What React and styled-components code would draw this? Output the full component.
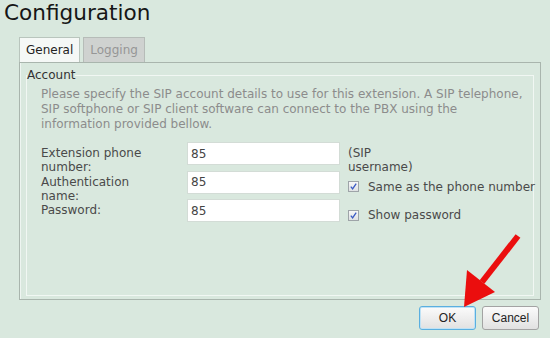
import React from "react";
import styled, { createGlobalStyle } from "styled-components";

const GlobalStyle = createGlobalStyle`
  html, body { margin: 0; padding: 0; }
  body {
    background: #d9e8de;
    font-family: "DejaVu Sans", Verdana, sans-serif;
  }
`;

const Page = styled.div`
  position: relative;
  width: 550px;
  height: 338px;
  overflow: hidden;
  background: #d9e8de;
`;

const Title = styled.h1`
  margin: 0;
  padding-left: 4px;
  font-size: 21.6px;
  line-height: 26px;
  font-weight: normal;
  color: #161616;
`;

const Dialog = styled.div`
  margin: 11px 0 0 19px;
  width: 522px;
`;

const Tabs = styled.div`
  display: flex;
  gap: 3px;
  height: 25px;
`;

const Tab = styled.div`
  box-sizing: border-box;
  height: 25px;
  padding: 0 6px;
  font-size: 12px;
  line-height: 24px;
  border: 1px solid ${(p) => (p.$active ? "#b9c5bd" : "#b6bcb8")};
  border-bottom: none;
  background: ${(p) => (p.$active ? "#f5f8f6" : "#cfd2d0")};
  color: ${(p) => (p.$active ? "#222" : "#969696")};
`;

const Panel = styled.div`
  box-sizing: border-box;
  height: 238px;
  border: 1px solid #a9b5ad;
  box-shadow: inset 1px 0 0 #eef5f1;
  padding: 5px 6px 3px 6px;
`;

const Fieldset = styled.fieldset`
  box-sizing: border-box;
  height: 100%;
  margin: 0;
  padding: 0;
  border: 1px solid #f1f7f3;
  min-inline-size: 0;
`;

const Legend = styled.legend`
  padding: 0;
  font-size: 12px;
  line-height: 14px;
  color: #333;
`;

const Content = styled.div`
  padding: 5px 0 0 14px;
`;

const Intro = styled.p`
  margin: 0;
  width: 485px;
  font-size: 12px;
  line-height: 15px;
  color: #8c8c8c;
`;

const FormGrid = styled.div`
  margin-top: 10px;
  display: grid;
  grid-template-columns: 138px 153px max-content;
  column-gap: 8px;
  grid-auto-rows: 28.5px;
  justify-content: start;
`;

const Label = styled.div`
  padding-top: 4px;
  max-width: 125px;
  font-size: 12px;
  line-height: 14px;
  color: #4a4a4a;
`;

const Field = styled.input`
  box-sizing: border-box;
  width: 153px;
  min-width: 0;
  height: 23px;
  margin: 0;
  padding: 0 3px;
  border: 1px solid #d3dcd6;
  background: #fff;
  font-family: "DejaVu Sans", Verdana, sans-serif;
  font-size: 12px;
  color: #444;
  outline: none;
`;

const Hint = styled.div`
  padding-top: 4px;
  width: 70px;
  font-size: 12px;
  line-height: 14px;
  color: #4a4a4a;
`;

const CheckRow = styled.label`
  display: flex;
  align-items: center;
  gap: 9px;
  padding-top: 4px;
  font-size: 12px;
  line-height: 14px;
  color: #4a4a4a;
  white-space: nowrap;
`;

const Box = styled.span`
  box-sizing: border-box;
  display: inline-flex;
  align-items: center;
  justify-content: center;
  width: 11px;
  height: 11px;
  border: 1px solid #9ea4a8;
  background: linear-gradient(#f7f7f7, #dfe1e3);
`;

const Buttons = styled.div`
  display: flex;
  justify-content: flex-end;
  gap: 6px;
  margin-top: 6px;
  padding-right: 2px;
`;

const Button = styled.button`
  box-sizing: border-box;
  width: 57px;
  height: 24px;
  margin: 0;
  padding: 0;
  border-radius: 3px;
  border: 1px solid ${(p) => (p.$primary ? "#5aafe0" : "#a3a3a3")};
  box-shadow: ${(p) => (p.$primary ? "inset 0 0 0 1px #bfe2f5" : "none")};
  background: linear-gradient(#fbfbfb, #e1e1e1);
  font-family: "Liberation Sans", Arial, sans-serif;
  font-size: 12px;
  color: #222;
`;

const ArrowLayer = styled.svg`
  position: absolute;
  left: 0;
  top: 0;
  pointer-events: none;
`;

function Check() {
  return (
    <Box>
      <svg width="9" height="9" viewBox="0 0 9 9">
        <path d="M1.8 4.6 L3.6 6.8 L7.2 1.6" fill="none" stroke="#3b5bc4" strokeWidth="1.3" />
      </svg>
    </Box>
  );
}

export default function App() {
  return (
    <>
      <GlobalStyle />
      <Page>
        <Title>Configuration</Title>
        <Dialog>
          <Tabs>
            <Tab $active>General</Tab>
            <Tab>Logging</Tab>
          </Tabs>
          <Panel>
            <Fieldset>
              <Legend>Account</Legend>
              <Content>
                <Intro>
                  Please specify the SIP account details to use for this extension. A SIP telephone,
                  SIP softphone or SIP client software can connect to the PBX using the information
                  provided bellow.
                </Intro>
                <FormGrid>
                  <Label>Extension phone number:</Label>
                  <Field defaultValue="85" />
                  <Hint>(SIP username)</Hint>
                  <Label>Authentication name:</Label>
                  <Field defaultValue="85" />
                  <CheckRow>
                    <Check />
                    Same as the phone number
                  </CheckRow>
                  <Label>Password:</Label>
                  <Field defaultValue="85" />
                  <CheckRow>
                    <Check />
                    Show password
                  </CheckRow>
                </FormGrid>
              </Content>
            </Fieldset>
          </Panel>
          <Buttons>
            <Button $primary>OK</Button>
            <Button>Cancel</Button>
          </Buttons>
        </Dialog>
        <ArrowLayer width="550" height="338" viewBox="0 0 550 338">
          <line x1="518" y1="236" x2="482" y2="282" stroke="#eb0e0e" strokeWidth="6" />
          <polygon points="464,307 467,270 495,292" fill="#eb0e0e" />
        </ArrowLayer>
      </Page>
    </>
  );
}
